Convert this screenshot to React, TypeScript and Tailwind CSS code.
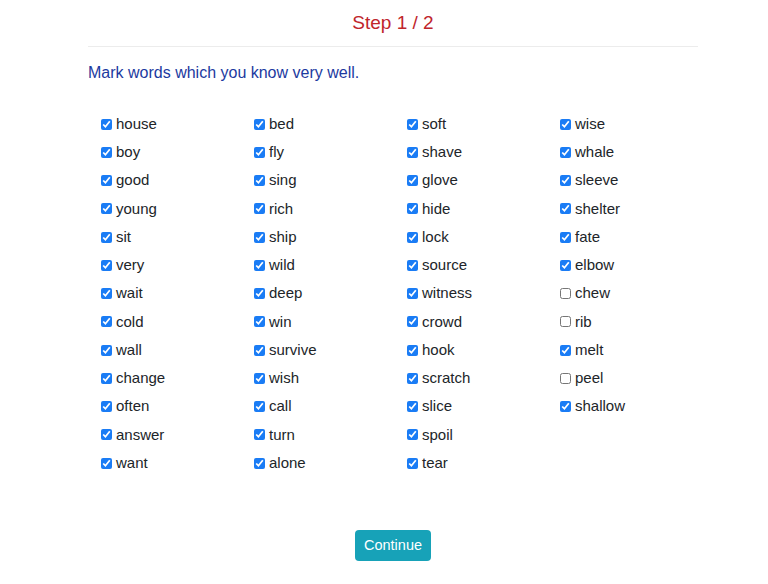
import { useState } from 'react'

const COLUMNS: [string, boolean][][] = [
  [
    ['house', true], ['boy', true], ['good', true], ['young', true], ['sit', true], ['very', true], ['wait', true],
    ['cold', true], ['wall', true], ['change', true], ['often', true], ['answer', true], ['want', true],
  ],
  [
    ['bed', true], ['fly', true], ['sing', true], ['rich', true], ['ship', true], ['wild', true], ['deep', true],
    ['win', true], ['survive', true], ['wish', true], ['call', true], ['turn', true], ['alone', true],
  ],
  [
    ['soft', true], ['shave', true], ['glove', true], ['hide', true], ['lock', true], ['source', true], ['witness', true],
    ['crowd', true], ['hook', true], ['scratch', true], ['slice', true], ['spoil', true], ['tear', true],
  ],
  [
    ['wise', true], ['whale', true], ['sleeve', true], ['shelter', true], ['fate', true], ['elbow', true], ['chew', false],
    ['rib', false], ['melt', true], ['peel', false], ['shallow', true],
  ],
]

function WordCheck({ word, initial }: { word: string; initial: boolean }) {
  const [checked, setChecked] = useState(initial)
  return (
    <label className="flex items-center h-[28.25px] text-[15px] text-[#212529] cursor-pointer">
      <input
        type="checkbox"
        checked={checked}
        onChange={() => setChecked(!checked)}
        className="w-[11px] h-[11px] m-0 mr-[4px] accent-[#1a7cf5]"
      />
      {word}
    </label>
  )
}

export default function App() {
  return (
    <div className="min-h-screen bg-white" style={{ fontFamily: '"Liberation Sans", Arial, sans-serif' }}>
      <div className="w-[610px] ml-[88px]">
        <h1 className="h-[47px] flex items-center justify-center text-[19px] text-[#c0252b] border-b border-[#ececec]">
          Step 1 / 2
        </h1>
        <p className="mt-[14px] leading-[24px] text-[16px] text-[#1c3aa0]">Mark words which you know very well.</p>

        <div className="mt-[25px] pl-[13px] grid grid-cols-[153px_153px_153px_153px]">
          {COLUMNS.map((col, i) => (
            <div key={i} className="flex flex-col">
              {col.map(([w, c]) => <WordCheck key={w} word={w} initial={c} />)}
            </div>
          ))}
        </div>

        <div className="mt-[53px] flex justify-center">
          <button className="h-[31px] w-[76px] rounded-[4px] bg-[#17a2b8] text-white text-[14.5px] cursor-pointer">
            Continue
          </button>
        </div>
      </div>
    </div>
  )
}
